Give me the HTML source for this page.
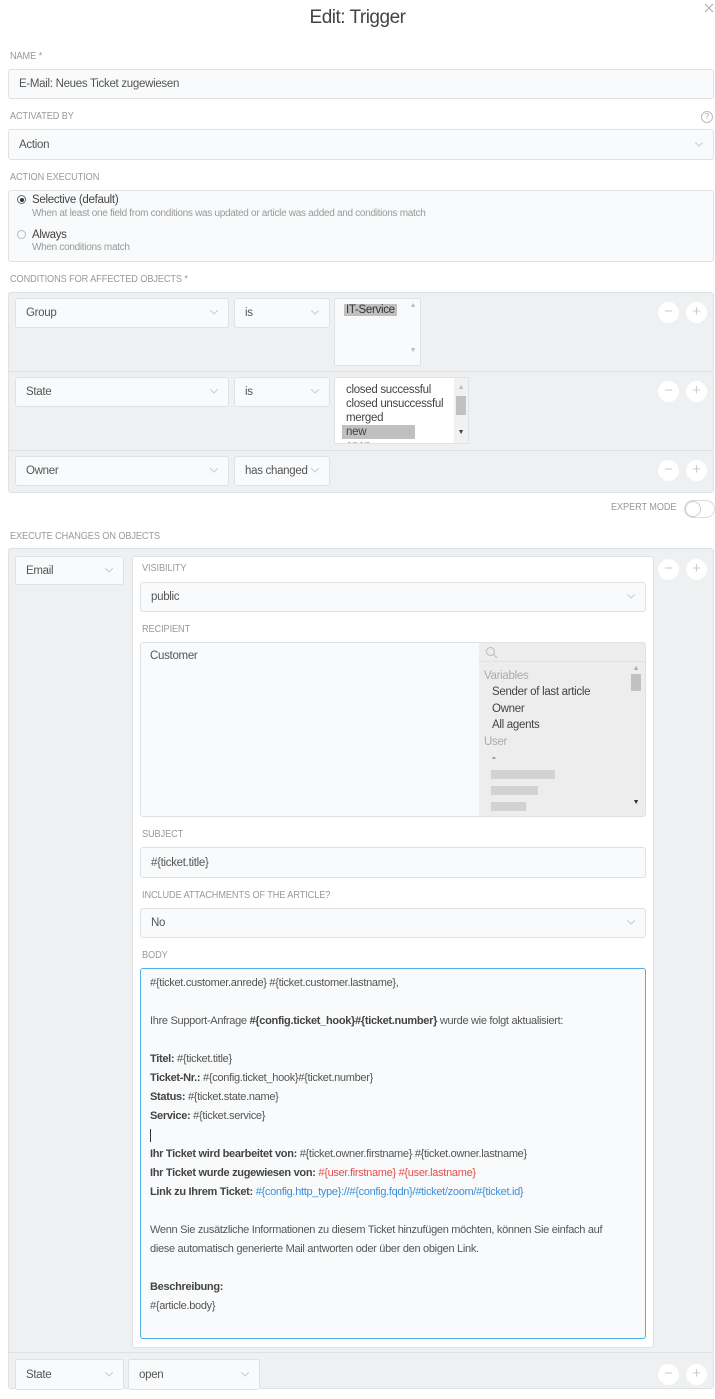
<!DOCTYPE html>
<html><head><meta charset="utf-8">
<style>
*{box-sizing:border-box;margin:0;padding:0}
body{width:715px;height:1399px;background:#fff;font-family:"Liberation Sans",sans-serif;color:#555;font-size:11.5px;letter-spacing:-0.3px;position:relative;overflow:hidden}
.a{position:absolute}
.lbl{position:absolute;font-size:10.2px;color:#999;letter-spacing:-0.1px;text-transform:uppercase;transform:scaleX(.9);transform-origin:left}
.inp{position:absolute;background:#f9fafb;border:1px solid #dfe2e4;border-radius:3px;padding-left:10px;display:flex;align-items:center}
.chev{position:absolute;right:10px;top:50%;margin-top:-3px;width:8px;height:5px}
.gray{position:absolute;background:#eef0f1;border:1px solid #dfe2e4;border-radius:3px}
.circ{position:absolute;width:21px;height:21px;border-radius:50%;background:#fff;color:#ccc;font-size:15px;line-height:20px;text-align:center;letter-spacing:0}
.lb{position:absolute;background:#fff;border:1px solid #dfe2e4;border-radius:2px}
.sb{position:absolute;right:0;top:0;bottom:0;width:14px;background:#f1f1f1}
.body p{height:19px;line-height:19px;white-space:nowrap}
b{color:#444}
.red{color:#e34f4f}.blue{color:#3c8fdc}
</style></head><body>
<div class="a" style="left:0;width:715px;top:7px;text-align:center;font-size:19px;color:#444;letter-spacing:-0.5px">Edit: Trigger</div>
<svg class="a" style="left:704px;top:3px" width="10" height="10"><path d="M1 1L9 9M9 1L1 9" stroke="#aaa" stroke-width="1"/></svg>

<div class="lbl" style="left:10px;top:51px">Name *</div>
<div class="inp" style="left:8px;top:69px;width:706px;height:30px">E-Mail: Neues Ticket zugewiesen</div>

<div class="lbl" style="left:10px;top:111px">Activated by</div>
<div class="a" style="left:701px;top:111px;width:12px;height:12px;border:1px solid #bbb;border-radius:50%;font-size:8px;color:#aaa;text-align:center;line-height:10px;letter-spacing:0">?</div>
<div class="inp" style="left:8px;top:129px;width:706px;height:31px">Action<svg class="chev" viewBox="0 0 8 5"><path d="M0 0L4 4L8 0" fill="none" stroke="#ccc"/></svg></div>

<div class="lbl" style="left:10px;top:172px">Action execution</div>
<div class="a" style="left:8px;top:190px;width:706px;height:72px;background:#f9fafb;border:1px solid #dfe2e4;border-radius:3px"></div>
<div class="a" style="left:17px;top:195px;width:9px;height:9px;border:1px solid #666;border-radius:50%"><div style="margin:1.5px;width:4px;height:4px;border-radius:50%;background:#333"></div></div>
<div class="a" style="left:32px;top:194px;color:#444">Selective (default)</div>
<div class="a" style="left:32px;top:208px;font-size:10px;color:#999">When at least one field from conditions was updated or article was added and conditions match</div>
<div class="a" style="left:17px;top:230px;width:9px;height:9px;border:1px solid #bbb;border-radius:50%"></div>
<div class="a" style="left:32px;top:229px;color:#444">Always</div>
<div class="a" style="left:32px;top:242px;font-size:10px;color:#999">When conditions match</div>

<div class="lbl" style="left:10px;top:274px">Conditions for affected objects *</div>
<div class="gray" style="left:8px;top:292px;width:706px;height:201px"></div>
<div class="a" style="left:9px;top:371px;width:704px;height:1px;background:#dfe2e4"></div>
<div class="a" style="left:9px;top:450px;width:704px;height:1px;background:#dfe2e4"></div>

<div class="inp" style="left:15px;top:298px;width:214px;height:30px">Group<svg class="chev" viewBox="0 0 8 5"><path d="M0 0L4 4L8 0" fill="none" stroke="#ccc"/></svg></div>
<div class="inp" style="left:234px;top:298px;width:96px;height:30px">is<svg class="chev" viewBox="0 0 8 5"><path d="M0 0L4 4L8 0" fill="none" stroke="#ccc"/></svg></div>
<div class="lb" style="left:334px;top:298px;width:87px;height:68px;background:#f9fafb"><div class="a" style="left:9px;top:5px;background:#c0c0c0;color:#333;padding:0 2px">IT-Service</div><div class="sb" style="background:#f9fafb"><div style="font-size:7px;color:#bbb;text-align:center;margin-top:3px">▲</div><div style="font-size:7px;color:#bbb;text-align:center;margin-top:38px">▼</div></div></div>
<div class="circ" style="left:658px;top:302px">−</div><div class="circ" style="left:686px;top:302px">+</div>

<div class="inp" style="left:15px;top:377px;width:214px;height:30px">State<svg class="chev" viewBox="0 0 8 5"><path d="M0 0L4 4L8 0" fill="none" stroke="#ccc"/></svg></div>
<div class="inp" style="left:234px;top:377px;width:96px;height:30px">is<svg class="chev" viewBox="0 0 8 5"><path d="M0 0L4 4L8 0" fill="none" stroke="#ccc"/></svg></div>
<div class="lb" style="left:334px;top:377px;width:135px;height:67px;overflow:hidden;color:#444;line-height:14px">
<div class="a" style="left:11px;top:5px">closed successful<br>closed unsuccessful<br>merged</div>
<div class="a" style="left:7px;top:47px;width:73px;height:14px;background:#c0c0c0;padding-left:4px">new</div>
<div class="a" style="left:11px;top:61px">open</div>
<div class="sb"><div style="font-size:7px;color:#bbb;text-align:center;margin-top:3px">▲</div><div style="margin:1px 2px;height:19px;background:#c1c1c1"></div><div style="font-size:7px;color:#444;text-align:center;margin-top:11px">▼</div></div></div>
<div class="circ" style="left:658px;top:381px">−</div><div class="circ" style="left:686px;top:381px">+</div>

<div class="inp" style="left:15px;top:456px;width:214px;height:30px">Owner<svg class="chev" viewBox="0 0 8 5"><path d="M0 0L4 4L8 0" fill="none" stroke="#ccc"/></svg></div>
<div class="inp" style="left:234px;top:456px;width:96px;height:30px">has changed<svg class="chev" viewBox="0 0 8 5"><path d="M0 0L4 4L8 0" fill="none" stroke="#ccc"/></svg></div>
<div class="circ" style="left:658px;top:460px">−</div><div class="circ" style="left:686px;top:460px">+</div>

<div class="lbl" style="left:611px;top:502px">Expert mode</div>
<div class="a" style="left:684px;top:500px;width:31px;height:18px;border:1px solid #ddd;border-radius:9px;background:#fff"><div style="width:16px;height:16px;border-radius:50%;border:1px solid #ccc;background:#fff"></div></div>

<div class="lbl" style="left:10px;top:531px">Execute changes on objects</div>
<div class="gray" style="left:8px;top:548px;width:706px;height:841px"></div>
<div class="a" style="left:9px;top:1352px;width:704px;height:1px;background:#dfe2e4"></div>

<div class="inp" style="left:15px;top:556px;width:109px;height:29px">Email<svg class="chev" viewBox="0 0 8 5"><path d="M0 0L4 4L8 0" fill="none" stroke="#ccc"/></svg></div>
<div class="a" style="left:132px;top:556px;width:522px;height:792px;background:#fff;border:1px solid #dfe2e4;border-radius:3px"></div>
<div class="circ" style="left:658px;top:559px">−</div><div class="circ" style="left:686px;top:559px">+</div>

<div class="lbl" style="left:142px;top:563px">Visibility</div>
<div class="inp" style="left:140px;top:582px;width:506px;height:30px">public<svg class="chev" viewBox="0 0 8 5"><path d="M0 0L4 4L8 0" fill="none" stroke="#ccc"/></svg></div>

<div class="lbl" style="left:142px;top:624px">Recipient</div>
<div class="a" style="left:140px;top:642px;width:506px;height:175px;background:#f9fafb;border:1px solid #dfe2e4;border-radius:3px;overflow:hidden">
<div class="a" style="left:9px;top:7px">Customer</div>
<div class="a" style="left:338px;top:0;width:168px;height:175px;background:#ededed">
 <div style="height:19px;border-bottom:1px solid #dfe2e4"><svg width="14" height="14" style="margin:3px 0 0 6px"><circle cx="5.5" cy="5.5" r="4" fill="none" stroke="#bbb"/><path d="M8.5 8.5L12 12" stroke="#bbb"/></svg></div>
 <div class="a" style="left:5px;top:27px;color:#aaa">Variables</div>
 <div class="a" style="left:13px;top:43px;color:#444">Sender of last article</div>
 <div class="a" style="left:13px;top:60px;color:#444">Owner</div>
 <div class="a" style="left:13px;top:76px;color:#444">All agents</div>
 <div class="a" style="left:5px;top:93px;color:#aaa">User</div>
 <div class="a" style="left:13px;top:109px;color:#444">-</div>
 <div class="a" style="left:12px;top:127px;width:64px;height:9px;background:#d2d2d2"></div>
 <div class="a" style="left:12px;top:143px;width:47px;height:9px;background:#d2d2d2"></div>
 <div class="a" style="left:12px;top:159px;width:35px;height:9px;background:#d2d2d2"></div>
 <div class="a" style="left:150px;top:22px;width:14px;height:152px"><div style="font-size:7px;color:#aaa;text-align:center">▲</div><div style="margin:2px 2px;height:17px;background:#c1c1c1"></div><div style="font-size:7px;color:#333;text-align:center;margin-top:108px">▼</div></div>
</div></div>

<div class="lbl" style="left:142px;top:829px">Subject</div>
<div class="inp" style="left:140px;top:847px;width:506px;height:31px">#{ticket.title}</div>

<div class="lbl" style="left:142px;top:890px">Include attachments of the article?</div>
<div class="inp" style="left:140px;top:908px;width:506px;height:30px">No<svg class="chev" viewBox="0 0 8 5"><path d="M0 0L4 4L8 0" fill="none" stroke="#ccc"/></svg></div>

<div class="lbl" style="left:142px;top:950px">Body</div>
<div class="a body" style="left:140px;top:968px;width:506px;height:371px;background:#f9fafb;border:1px solid #4fb0e8;border-radius:3px;padding:5px 0 0 9px;font-size:11px">
<p>#{ticket.customer.anrede} #{ticket.customer.lastname},</p>
<p></p>
<p>Ihre Support-Anfrage <b>#{config.ticket_hook}#{ticket.number}</b> wurde wie folgt aktualisiert:</p>
<p></p>
<p><b>Titel:</b> #{ticket.title}</p>
<p><b>Ticket-Nr.:</b> #{config.ticket_hook}#{ticket.number}</p>
<p><b>Status:</b> #{ticket.state.name}</p>
<p><b>Service:</b> #{ticket.service}</p>
<p><span style="display:inline-block;width:1px;height:13px;background:#333;vertical-align:middle"></span></p>
<p><b>Ihr Ticket wird bearbeitet von:</b> #{ticket.owner.firstname} #{ticket.owner.lastname}</p>
<p><b>Ihr Ticket wurde zugewiesen von:</b> <span class="red">#{user.firstname} #{user.lastname}</span></p>
<p><b>Link zu Ihrem Ticket:</b> <span class="blue">#{config.http_type}://#{config.fqdn}/#ticket/zoom/#{ticket.id}</span></p>
<p></p>
<p>Wenn Sie zusätzliche Informationen zu diesem Ticket hinzufügen möchten, können Sie einfach auf</p>
<p>diese automatisch generierte Mail antworten oder über den obigen Link.</p>
<p></p>
<p><b>Beschreibung:</b></p>
<p>#{article.body}</p>
</div>

<div class="inp" style="left:15px;top:1359px;width:109px;height:31px">State<svg class="chev" viewBox="0 0 8 5"><path d="M0 0L4 4L8 0" fill="none" stroke="#ccc"/></svg></div>
<div class="inp" style="left:128px;top:1359px;width:132px;height:31px">open<svg class="chev" viewBox="0 0 8 5"><path d="M0 0L4 4L8 0" fill="none" stroke="#ccc"/></svg></div>
<div class="circ" style="left:658px;top:1364px">−</div><div class="circ" style="left:686px;top:1364px">+</div>
</body></html>
